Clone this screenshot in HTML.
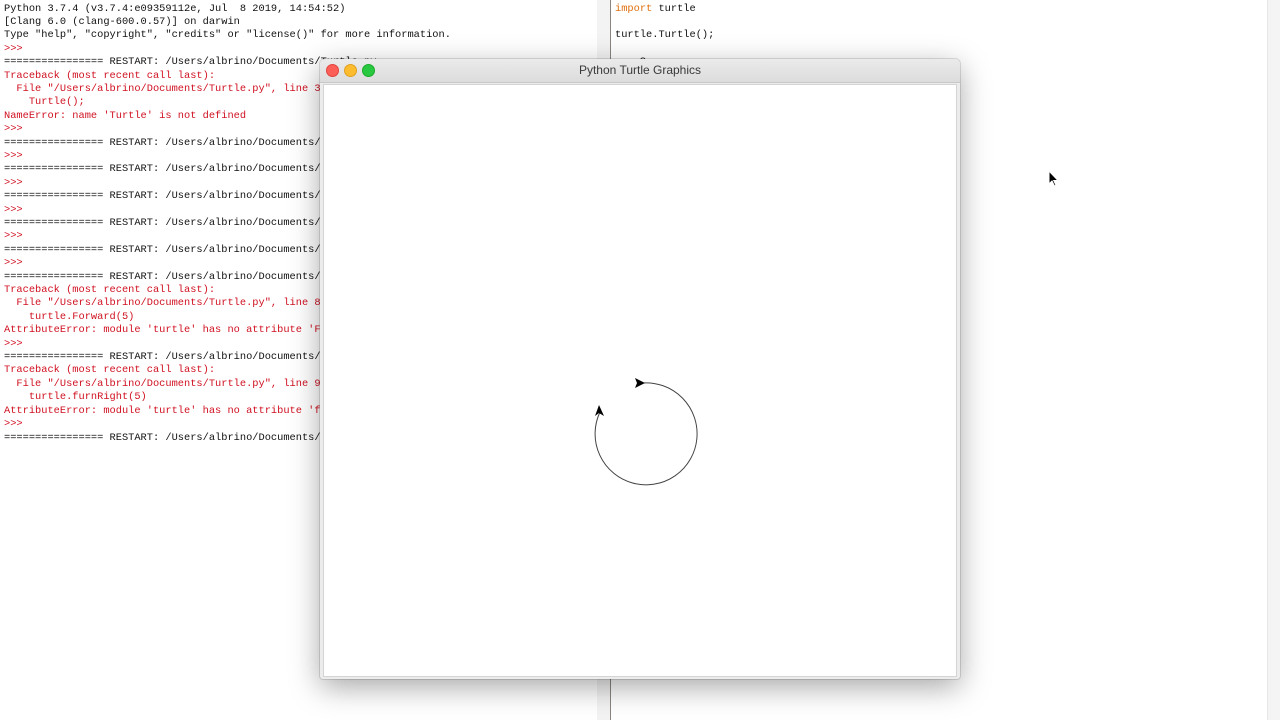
<!DOCTYPE html>
<html><head><meta charset="utf-8"><style>
html,body{margin:0;padding:0;width:1280px;height:720px;overflow:hidden;background:#fff;position:relative}
.mono{font-family:"Liberation Mono",monospace;font-size:10.35px;line-height:13.4px;white-space:pre;color:#111}
#shell{position:absolute;left:4px;top:2.5px;width:592px;overflow:hidden}
.r{color:#d01020}
.g{position:absolute;left:597px;top:0;width:13px;height:720px;background:#f3f3f3;border-right:1px solid #8a8580}
.rb{position:absolute;left:1267px;top:0;width:13px;height:720px;background:#f4f4f4;border-left:1px solid #e6e6e6}
#ed{position:absolute;left:615px;top:2.5px}
.k{color:#e07010}
#win{position:absolute;left:320px;top:59px;width:640px;height:620px;background:#ececec;border-radius:5px 5px 3px 3px;box-shadow:0 8px 30px rgba(0,0,0,.35),0 0 0 1px rgba(0,0,0,.12)}
#title{position:absolute;left:0;top:0;width:640px;height:23px;text-align:center;font-family:"Liberation Sans",sans-serif;font-size:12px;line-height:22px;color:#3a3a3a;background:linear-gradient(#ebebeb,#dcdcdc);border-radius:5px 5px 0 0;border-bottom:1px solid #c8c8c8}
.b{position:absolute;top:5px;width:11px;height:11px;border-radius:50%}
#canvas{position:absolute;left:3px;top:25px;width:632px;height:591px;background:#fff;border:1px solid #d4d4d4}
</style></head><body>
<div id="shell" class="mono">Python 3.7.4 (v3.7.4:e09359112e, Jul  8 2019, 14:54:52)
[Clang 6.0 (clang-600.0.57)] on darwin
Type "help", "copyright", "credits" or "license()" for more information.
<span class="r">&gt;&gt;&gt;</span>
================ RESTART: /Users/albrino/Documents/Turtle.py
<span class="r">Traceback (most recent call last):
  File "/Users/albrino/Documents/Turtle.py", line 3
    Turtle();
NameError: name 'Turtle' is not defined
&gt;&gt;&gt;</span>
================ RESTART: /Users/albrino/Documents/Turtle.py
<span class="r">&gt;&gt;&gt;</span>
================ RESTART: /Users/albrino/Documents/Turtle.py
<span class="r">&gt;&gt;&gt;</span>
================ RESTART: /Users/albrino/Documents/Turtle.py
<span class="r">&gt;&gt;&gt;</span>
================ RESTART: /Users/albrino/Documents/Turtle.py
<span class="r">&gt;&gt;&gt;</span>
================ RESTART: /Users/albrino/Documents/Turtle.py
<span class="r">&gt;&gt;&gt;</span>
================ RESTART: /Users/albrino/Documents/Turtle.py
<span class="r">Traceback (most recent call last):
  File "/Users/albrino/Documents/Turtle.py", line 8
    turtle.Forward(5)
AttributeError: module 'turtle' has no attribute 'Forward'
&gt;&gt;&gt;</span>
================ RESTART: /Users/albrino/Documents/Turtle.py
<span class="r">Traceback (most recent call last):
  File "/Users/albrino/Documents/Turtle.py", line 9
    turtle.furnRight(5)
AttributeError: module 'turtle' has no attribute 'furnRight'
&gt;&gt;&gt;</span>
================ RESTART: /Users/albrino/Documents/Turtle.py</div>
<div class="g"></div>
<div class="rb"></div>
<div id="ed" class="mono"><span class="k">import</span> turtle

turtle.Turtle();

    ?</div>
<svg style="position:absolute;left:1048px;top:170px" width="12" height="18" viewBox="0 0 12 18"><path d="M1 1 L1 14 L4 11 L6.5 16 L8 15.3 L5.7 10.5 L10 10.5 Z" fill="#000" stroke="#fff" stroke-width="1"/></svg>
<div id="win">
 <div id="title">Python Turtle Graphics</div>
 <div class="b" style="left:6px;background:#fc5f57;border:.5px solid #e0443e"></div>
 <div class="b" style="left:24px;background:#fdbc2e;border:.5px solid #dea123"></div>
 <div class="b" style="left:42px;background:#28c840;border:.5px solid #1aab29"></div>
 <div id="canvas">
  <svg width="632" height="591" style="position:absolute;left:0;top:0">
   <path d="M318 298 A51 51 0 1 1 276 327" fill="none" stroke="#444" stroke-width="1"/>
   <path d="M311 293 L321 298 L311 303 L313 298 Z" fill="#000"/>
   <path d="M271 331 L275 320 L280 331 L275 328 Z" fill="#000"/>
  </svg>
 </div>
</div>
</body></html>
